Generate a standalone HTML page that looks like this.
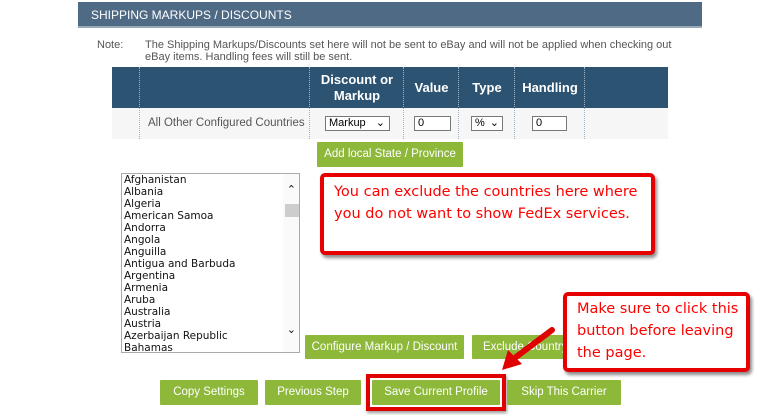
<!DOCTYPE html>
<html><head><style>
*{margin:0;padding:0;box-sizing:border-box}
body{width:768px;height:415px;background:#fff;position:relative;overflow:hidden;font-family:"Liberation Sans",Arial,sans-serif}
.a{position:absolute}
.btn{position:absolute;background:#8db83a;color:#fff;font-size:11.5px;text-align:center;border-radius:1px;overflow:hidden;white-space:nowrap}
.cell{position:absolute;top:0;height:72px;border-right:1px dotted #9fb3c5}
.th{position:absolute;color:#fff;font-weight:bold;font-size:13px;text-align:center;line-height:16px}
.inp{position:absolute;border:1px solid #777;background:#fff;font-size:11px;padding-left:3px;line-height:13px;height:15px}
.list div{font-family:"DejaVu Sans",sans-serif;font-size:10.5px;line-height:12px;color:#111;white-space:nowrap}
.call{position:absolute;border:4px solid #e60000;border-radius:5px;background:#fff;box-shadow:2px 3px 3px rgba(0,0,0,.45);color:#f00;font-family:"DejaVu Sans",sans-serif;font-size:14.5px;line-height:22px}
</style></head><body>
<div class="a" style="left:78px;top:2px;width:624px;height:26px;background:#4f6a85;border-bottom:2px solid #9aa9b8;color:#fff;font-size:12px;line-height:26px;padding-left:13px">SHIPPING MARKUPS / DISCOUNTS</div>
<div class="a" style="left:97px;top:39px;font-size:11px;color:#555">Note:</div>
<div class="a" style="left:145px;top:39px;font-size:11px;color:#555;line-height:12px;width:540px">The Shipping Markups/Discounts set here will not be sent to eBay and will not be applied when checking out eBay items. Handling fees will still be sent.</div>
<div class="a" style="left:112px;top:67px;width:556px;height:41px;background:#2c5372"></div>
<div class="a" style="left:112px;top:108px;width:556px;height:31px;background:#f6f6f6"></div>
<div class="a" style="left:112px;top:67px;width:556px;height:72px">
<div class="cell" style="left:0;width:28px"></div><div class="cell" style="left:28px;width:170px"></div><div class="cell" style="left:198px;width:94px"></div><div class="cell" style="left:292px;width:55px"></div><div class="cell" style="left:347px;width:56px"></div><div class="cell" style="left:403px;width:70px"></div>
</div>
<div class="th" style="left:310px;top:72px;width:94px">Discount or<br>Markup</div>
<div class="th" style="left:404px;top:80px;width:55px">Value</div>
<div class="th" style="left:459px;top:80px;width:56px">Type</div>
<div class="th" style="left:515px;top:80px;width:70px">Handling</div>
<div class="a" style="left:148px;top:117px;font-size:11.5px;color:#555">All Other Configured Countries</div>
<div class="inp" style="left:325px;top:116px;width:65px">Markup <span style="position:absolute;right:4px">&#8964;</span></div>
<div class="inp" style="left:414px;top:116px;width:37px">0</div>
<div class="inp" style="left:471px;top:116px;width:32px">% <span style="position:absolute;right:3px">&#8964;</span></div>
<div class="inp" style="left:532px;top:116px;width:35px">0</div>
<div class="btn" style="left:317px;top:142px;width:146px;height:25px;line-height:25px">Add local State / Province</div>
<div class="a list" style="left:121px;top:173px;width:179px;height:180px;border:1px solid #aaa;padding:0 2px;overflow:hidden">
<div>Afghanistan</div><div>Albania</div><div>Algeria</div><div>American Samoa</div><div>Andorra</div><div>Angola</div><div>Anguilla</div><div>Antigua and Barbuda</div><div>Argentina</div><div>Armenia</div><div>Aruba</div><div>Australia</div><div>Austria</div><div>Azerbaijan Republic</div><div>Bahamas</div>
<div class="a" style="right:0;top:0;width:16px;height:178px;background:#fafafa"></div>
<div class="a" style="right:0;top:30px;width:14px;height:13px;background:#cdcdcd"></div>
<div class="a" style="right:3px;top:10px;font-size:11px">&#8963;</div>
<div class="a" style="right:3px;top:150px;font-size:11px">&#8964;</div>
</div>
<div class="call" style="left:320px;top:173px;width:335px;height:82px;padding:4px 0 0 10px">You can exclude the countries here where you do not want to show FedEx services.</div>
<div class="btn" style="left:305px;top:335px;width:159px;height:24px;line-height:24px">Configure Markup / Discount</div>
<div class="btn" style="left:472px;top:335px;width:100px;height:24px;line-height:24px;text-align:left;padding-left:11px">Exclude Country</div>
<div class="call" style="left:563px;top:292px;width:187px;height:80px;padding:2px 0 0 10px">Make sure to click this button before leaving the page.</div>
<div class="btn" style="left:160px;top:380px;width:98px;height:25px;line-height:25px">Copy Settings</div>
<div class="btn" style="left:265px;top:380px;width:96px;height:25px;line-height:25px">Previous Step</div>
<div class="a" style="left:366px;top:374px;width:140px;height:37px;border:4px solid #e00000;box-shadow:1px 2px 3px rgba(0,0,0,.4)"></div>
<div class="btn" style="left:372px;top:380px;width:128px;height:25px;line-height:25px;outline:1px solid #fff">Save Current Profile</div>
<div class="btn" style="left:507px;top:380px;width:114px;height:25px;line-height:25px">Skip This Carrier</div>
<svg class="a" style="left:490px;top:320px" width="80" height="60"><path d="M62 10 L22 40" stroke="#e00000" stroke-width="6" stroke-linecap="round"/><path d="M12 50 L18 30 L32 44 Z" fill="#e00000"/></svg>
</body></html>
